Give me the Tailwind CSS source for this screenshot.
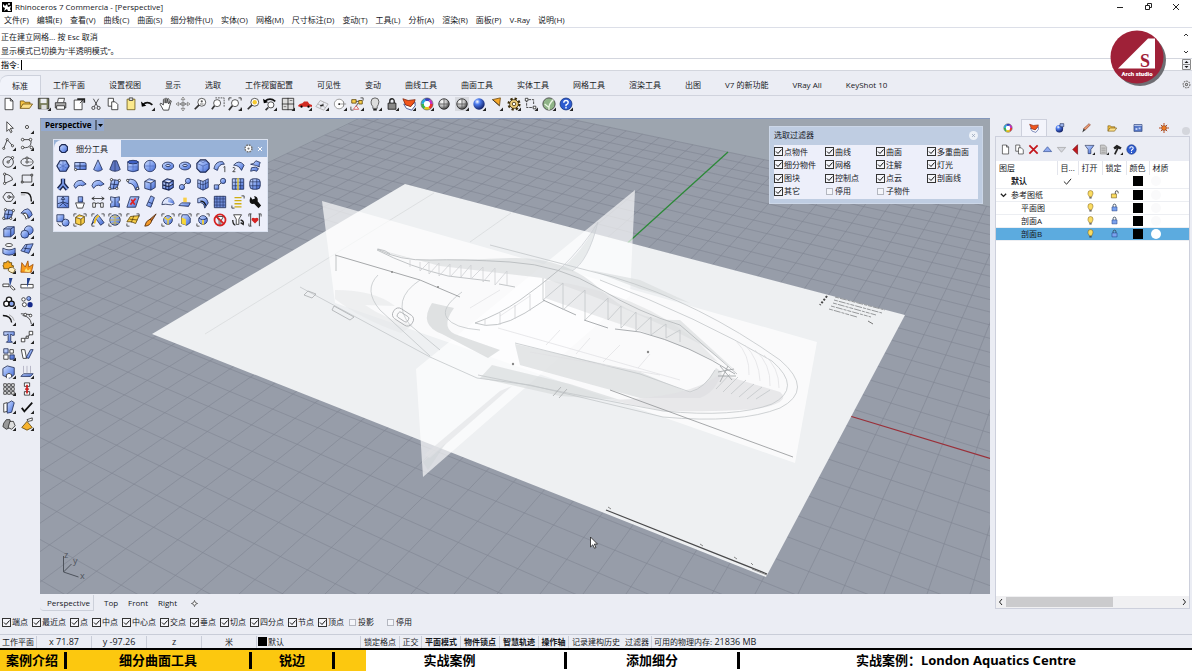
<!DOCTYPE html>
<html lang="zh-CN">
<head>
    <meta charset="UTF-8">
    <meta name="viewport" content="width=device-width, initial-scale=1.0">
    <title>Rhinoceros 7 Commercia - [Perspective]</title>
    <script src="https://cdn.jsdelivr.net/npm/@tailwindcss/browser@4"></script>
</head>
<body class="h-screen flex flex-col overflow-hidden bg-[#ebedf4] text-[#16181d] text-[8px] leading-[12px] font-['Open_Sans','Noto_Sans_CJK_SC',sans-serif]">

    <!-- Shared gradients -->
    <svg class="absolute size-0" aria-hidden="true">
        <defs>
            <linearGradient id="blue" x1="0" y1="0" x2="1" y2="1">
                <stop offset="0" stop-color="#d3e0fd"/><stop offset=".5" stop-color="#86a5f0"/><stop offset="1" stop-color="#4468cf"/>
            </linearGradient>
            <radialGradient id="ball" cx=".35" cy=".3" r=".8">
                <stop offset="0" stop-color="#fff"/><stop offset=".3" stop-color="#4f7ef0"/><stop offset="1" stop-color="#07104f"/>
            </radialGradient>
            <radialGradient id="grayball" cx=".35" cy=".3" r=".8">
                <stop offset="0" stop-color="#fff"/><stop offset=".5" stop-color="#bbb"/><stop offset="1" stop-color="#222"/>
            </radialGradient>
        </defs>
    </svg>

    <!-- Title bar -->
    <header class="bg-white">
        <div class="h-[13px] flex items-center pl-[2px]">
            <svg class="size-[10px] mr-[3px]" viewBox="0 0 10 10"><path d="M0 0h10v10H0z"/><path d="M1 2l2 2 2-2 1 3 3-1-1 3 1 2H6L5 7 2 9 3 6 1 5z" fill="#fff"/><circle cx="7" cy="2" r="1" fill="#fff"/></svg>
            <h1>Rhinoceros 7 Commercia - [Perspective]</h1>
            <div class="ml-auto flex gap-[18px] pr-[11px]">
                <button aria-label="最小化"><svg class="size-[10px]" viewBox="0 0 10 10" stroke="#222"><path d="M2 5.500h6"/></svg></button>
                <button aria-label="还原"><svg class="size-[10px]" viewBox="0 0 10 10" fill="none" stroke="#222"><path d="M2.500 3.500h4v4h-4zM4.500 3V1.500h4v4H7"/></svg></button>
                <button aria-label="关闭"><svg class="size-[10px]" viewBox="0 0 10 10" stroke="#222"><path d="M2 2l6 6M8 2L2 8"/></svg></button>
            </div>
        </div>
        <nav id="menu" class="h-[14px] flex items-center gap-2 px-1"></nav>
    </header>

    <!-- Command history and prompt -->
    <section class="relative bg-white border-t border-[#dcdfe8]">
        <div class="h-[30px] pt-[2px] pl-[1px] leading-[14px] flex justify-between">
            <div>
                <p>正在建立网格... 按 Esc 取消</p>
                <p>显示模式已切换为“半透明模式”。</p>
            </div>
            <svg class="w-[11px] h-7" viewBox="0 0 11 28" fill="none" stroke="#333"><path d="M3 6l2-2 2 2M3 21l2 2 2-2"/></svg>
        </div>
        <div class="h-[13px] flex items-center border-y border-[#d3d6de] pl-[1px]">
            <label for="cmd" class="mr-[2px] font-medium">指令:</label>
            <span class="w-px h-[10px] bg-black"></span>
            <input id="cmd" class="flex-1 h-[10px] outline-none">
            <svg class="w-[11px] h-[11px]" viewBox="0 0 11 11" fill="#eef0f5" stroke="#888"><path d="M1.500.5h8v5h-8zM1.500 5.500h8v5h-8z"/><path d="M5.500 2l2 2h-4zM5.500 9l2-2h-4z" fill="#111" stroke="none"/></svg>
        </div>
        <svg class="absolute z-10 right-[26px] top-[1px] w-[56px] h-[58px]" viewBox="0 0 56 58">
            <circle cx="30" cy="31" r="26" fill="#6e6e73"/>
            <circle cx="27" cy="28" r="26.500" fill="#9f2138"/>
            <path d="M8 39.500L38 9.500h7v30z" fill="#fff"/>
            <text x="30" y="38" font-family="Liberation Serif" font-weight="700" font-size="18" fill="#9f2138">S</text>
            <text x="27" y="47" text-anchor="middle" font-family="Roboto" font-weight="900" font-size="6" fill="#fff">Arch studio</text>
        </svg>
    </section>

    <!-- Toolbar tabs -->
    <div class="pt-[4px] flex items-end border-b border-[#d0d3dd]">
        <nav id="tabs" class="flex"></nav>
        <svg class="ml-auto mr-[1px] mb-[6px] size-[9px]" viewBox="0 0 16 16" fill="none" stroke="#777" stroke-width="2"><circle cx="8" cy="8" r="6" stroke-dasharray="3 1.500"/><circle cx="8" cy="8" r="2"/></svg>
    </div>
    <div id="mainbar" class="h-[22px] w-[573px] pl-[2px] pb-[6px] flex items-center justify-between"></div>

    <main class="flex-1 min-h-0 flex">
        <!-- Side tools -->
        <aside id="sidebar" class="w-10 h-[313px] pt-[2px] pr-[4px] grid grid-cols-2 content-between"></aside>

        <div class="flex-1 min-w-0 flex flex-col">
            <!-- Perspective viewport -->
            <section class="relative flex-1 min-h-0 bg-[#979da9] overflow-hidden border-t border-[#8497bb]">
                <svg class="block w-full h-full" viewBox="40 119 950 475" preserveAspectRatio="xMidYMid slice">
                    <path d="M40 119V272L360 119zM570 119L728 152 990 207V119z" fill="#9da5af"/>
                    <g id="grid" stroke="#7c828e" stroke-width=".6" opacity=".85"></g>
                    <path d="M728 152L600 268" stroke="#2c8a38" stroke-width="1.300"/>
                    <path d="M830 410L990 458.500" stroke="#9a3039" stroke-width="1.200"/>

                    <!-- Ground plan sheet -->
                    <path d="M405 184L905 315 766 577 152 334z" fill="#eef0f2"/>
                    <path d="M434 193L205 334M511 213L470 242" fill="none" stroke="#d6d8da" stroke-width=".7"/>

                    <!-- Long section sheet and cross section sheet -->
                    <path d="M322 201L817 342 795 463 335 303z" fill="#fff" opacity=".68"/>
                    <path d="M635 190L416 369 423 477 630 296z" fill="#fff" opacity=".66"/>

                    <!-- Plan linework -->
                    <path d="M432 303q-14 22 10 31l46 24 12-8-40-14q-22-6-6-28z" fill="#d3d5d7" opacity=".7"/>
                    <path d="M515 344L640 372 690 393Q705 388 716 368L722 372Q716 392 700 398L640 398 520 365zM480 378L492 365 570 384 620 400 560 396z" fill="#d9dbdd" opacity=".7"/>
                    <path d="M590 270L640 280 690 303 640 289z" fill="#dcdee0" opacity=".7"/>
                    <path d="M720 374L780 392Q790 400 770 406T663 411L610 400Q690 398 720 374z" fill="#dfe0e2" opacity=".7"/>
                    <path d="M335 290q40 0 60 16l-30-1q20 14 48 20l-12 8q-40-14-66-34z" fill="#e6e8ea" opacity=".6"/>
                    <g fill="none" stroke="#c3c6c9" stroke-width=".8">
                        <path d="M300 287L430 357 477 378 530 385 663 417Q740 424 780 408 Q815 390 780 360 Q700 303 613 277L490 245"/>
                        <path d="M478 375Q580 396 663 411 Q735 418 772 404 Q803 388 772 361 Q700 318 600 280"/>
                        <path d="M378 275Q363 290 380 310L430 356M420 280Q390 300 410 325L440 350"/>
                        <path d="M462 292Q440 308 447 318T480 330M515 343L640 374 690 392Q705 388 715 370"/>
                    </g>
                    <g fill="none" stroke="#dfe0e2" stroke-width=".7">
                        <path d="M498 328L680 380M530 352L660 375M745 345q14 14 15 36M755 350q16 14 15 36M736 341q14 14 13 34M764 355q15 12 15 33"/>
                        <path d="M560 330l-14 15M590 338l-14 16M620 345l-17 17M650 354l-12 14M500 290l-30 18M530 296l-30 20"/>
                    </g>
                    <g fill="none" stroke="#a9acaf" stroke-width=".8">
                        <rect x="392" y="311" width="22" height="12" rx="5" transform="rotate(33 403 317)"/>
                        <rect x="397" y="314" width="12" height="6" rx="2" transform="rotate(33 403 317)"/>
                        <path d="M308 291l8 3-4 4-8-3zM334 306l20 11-4 3-18-10zM553 396l8-9M559 398l8-9"/>
                        <path d="M730 374l-14 15M738 377l-15 15M746 380l-15 14M754 384l-15 13M762 387l-15 12M770 390l-14 9" stroke="#c3c6c9"/>
                    </g>

                    <!-- Roof truss -->
                    <path d="M377 249Q405 260 430 260T510 258 600 289 680 320L737 372 700 344Q640 312 543 278L440 266z" fill="#d6d8da" opacity=".6"/>
                    <path d="M545 280Q640 292 700 344L718 362Q670 340 608 320L545 298z" fill="#dddfe1" opacity=".6"/>
                    <g fill="none" stroke="#b3b6b9" stroke-width=".8">
                        <path d="M335 255L420 280 460 297M610 390L793 457" stroke="#909396"/>
                        <path d="M336 256v15M378 249q8 1 12 5" />
                        <path d="M377 249Q400 261 430 260T510 262 600 289 680 325L737 374M377 250Q410 267 448 276L490 281M499 284l16 3"/>
                        <path d="M410 260v7M420 262v9l9-9v12l10-11v13l11-12v13l11-12v12l10-12v14l12-12v15l12-14v17l12-14v15" stroke="#cfd1d4"/>
                        <path d="M475 323Q500 314 520 300T560 269M475 323Q495 331 525 313L545 300"/>
                        <path d="M543 300L576 315M584 320L608 328M615 329L640 332Q690 345 735 374" stroke="#96999d"/>
                        <path d="M543 278v22l20-17v27l22-20v30l23-22v22l13-14v22l15-16v19l15-14v18l15-11v14l14-8v12" stroke="#c3c6c9"/>
                        <path d="M485 319v6M500 313v12M515 305v14M530 294v17" stroke="#cfd1d4"/>
                        <path d="M718 372l16-3M718 376h18M720 366l12 14M728 366l-8 16" stroke="#9b9ea1"/>
                    </g>
                    <g fill="#888"><circle cx="392" cy="272" r="1"/><circle cx="438" cy="287" r="1"/><circle cx="513" cy="364" r="1.200"/><circle cx="648" cy="352" r="1.200"/></g>
                    <path d="M598 222Q588 262 572 271M560 269Q585 245 598 222" fill="none" stroke="#c9ccd1" stroke-width=".7"/>
                    <path d="M598 222Q580 255 560 269L572 271Q590 258 598 222zM423 462L446 443 428 470z" fill="#c9cdd2" opacity=".35"/>
                    <path d="M424 455L500 391 512 386 430 458z" fill="#dfe1e4" opacity=".6"/>

                    <!-- Legend and scale bar -->
                    <g stroke="#8b8d90" stroke-width=".9" stroke-dasharray="4 1 7 1 3 1">
                        <path d="M835 297l50 13M834 300l48 13M833 303l43 12M831 306l40 11M829 309l28 8"/>
                        <path d="M827 296l-7 9" stroke="#444" stroke-width="2" stroke-dasharray="2 1.500"/>
                    </g>
                    <path d="M868 321l5 3" stroke="#777"/>
                    <path d="M606 510L767 574" stroke="#4a4a4c" stroke-width="1.300"/>
                    <path d="M608 507l3 2M700 544l3 2M734 557l3 2M751 563l2 2M752 569l15 6" stroke="#888"/>

                    <g stroke="#4e535c" fill="none"><path d="M63.500 572v-16M63.500 572l8-8M63.500 572l15 5"/></g>
                    <g fill="#4e535c" font-size="9" font-family="Open Sans"><text x="64" y="558">z</text><text x="73" y="564">y</text><text x="80" y="579">x</text></g>
                    <path d="M590.500 537v10l2.300-2.200 1.700 3.500 1.500-.8-1.700-3.400h3.200z" fill="#fff" stroke="#222" stroke-width=".8"/>
                </svg>

                <button class="absolute left-[1px] top-0 h-[12px] w-[63px] pl-[4px] flex items-center bg-[#93a9cf] font-bold text-black">
                    Perspective
                    <svg class="ml-auto w-[9px] h-[10px]" viewBox="0 0 9 10"><path d="M1 0v10" stroke="#222"/><path d="M3 4h5L5.500 7z"/></svg>
                </button>

                <!-- SubD tools palette -->
                <div class="absolute left-[13px] top-[20px] w-[215px] h-[93px] bg-[#edeffa] border border-[#dbe2f0]">
                    <div class="h-[17px] flex items-center bg-[#98b2d7]">
                        <h2 class="w-[67px] h-full pl-[5px] flex items-center gap-[8px] bg-[#edeffa] rounded-tl-lg">
                            <svg class="size-[9px]" viewBox="0 0 16 16"><path d="M5 1h6l4 4v6l-4 4H5l-4-4V5z" fill="url(#blue)" stroke="#1b2750" stroke-width="2"/></svg>
                            细分工具
                        </h2>
                        <button aria-label="选项" class="ml-auto"><svg class="size-[9px]" viewBox="0 0 16 16"><circle cx="8" cy="8" r="6" fill="#fff" stroke="#777" stroke-width="3" stroke-dasharray="3 1.700"/><circle cx="8" cy="8" r="4.500" fill="#fff"/><circle cx="8" cy="8" r="2" fill="#777"/></svg></button>
                        <button aria-label="关闭" class="mx-[4px]"><svg class="size-[6px]" viewBox="0 0 6 6" stroke="#fff"><path d="M1 1l4 4M5 1L1 5"/></svg></button>
                    </div>
                    <div id="subd" class="h-[72px] pr-[3px] grid grid-cols-12 content-around"></div>
                </div>

                <!-- Selection filter -->
                <div class="absolute right-[7px] top-[7px] w-[214px] h-[78px] px-1 bg-[#bfcde2] border border-[#ccd7e8]">
                    <div class="h-[18px] pb-[2px] flex items-center justify-between">
                        <h2>选取过滤器</h2>
                        <button aria-label="关闭"><svg class="size-[9px]" viewBox="0 0 10 10"><circle cx="5" cy="5" r="5" fill="#edf1f7"/><path d="M3.500 3.500l3 3M6.500 3.500l-3 3" stroke="#9aa7bc"/></svg></button>
                    </div>
                    <div id="filters" class="h-[54px] pb-[1px] grid grid-cols-4 bg-[#edeffa]"></div>
                </div>
            </section>

            <!-- Viewport tabs -->
            <nav class="h-[18px] flex items-center gap-[10px]">
                <a href="#" class="h-[16px] flex items-center pl-[7px] pr-[3px] border-r border-b border-[#ccd0da] rounded-bl">Perspective</a>
                <a href="#">Top</a>
                <a href="#">Front</a>
                <a href="#">Right</a>
                <button aria-label="新增" class="ml-1"><svg class="size-[7px]" viewBox="0 0 8 8" fill="#fff" stroke="#555"><path d="M4 .5L5 3l2.500 1L5 5 4 7.500 3 5 .5 4 3 3z"/></svg></button>
            </nav>
        </div>

        <!-- Layers panel -->
        <aside class="w-[202px] pl-[5px] pr-[2px] pb-[3px] flex flex-col">
            <div id="paneltabs" class="flex items-end h-[18px] pt-[2px]"></div>
            <div class="flex-1 min-h-0 flex flex-col border border-[#cdd0dc]">
                <div id="layerbar" class="h-[24px] pl-[4px] flex items-center gap-[3px]"></div>
                <div class="flex-1 bg-white">
                    <table class="w-full table-fixed border-collapse">
                        <thead>
                            <tr class="h-[14px] text-left">
                                <th class="w-[61px] pl-[3px] font-normal border-r border-[#e3e5ec]">图层</th>
                                <th class="w-[21px] pl-[3px] font-normal border-r border-[#e3e5ec]">目...</th>
                                <th class="w-[24px] pl-[3px] font-normal border-r border-[#e3e5ec]">打开</th>
                                <th class="w-[24px] pl-[3px] font-normal border-r border-[#e3e5ec]">锁定</th>
                                <th class="w-[23px] pl-[3px] font-normal border-r border-[#e3e5ec]">颜色</th>
                                <th class="pl-[3px] font-normal">材质</th>
                            </tr>
                        </thead>
                        <tbody id="layers"></tbody>
                    </table>
                </div>
                <div class="h-[12px] flex items-center bg-[#f0f0f2]">
                    <svg class="w-[10px] h-[10px]" viewBox="0 0 10 10" fill="none" stroke="#222"><path d="M6 2L3.500 5 6 8"/></svg>
                    <div class="flex-1"><div class="w-[62%] h-[10px] bg-[#cbcbcd]"></div></div>
                    <svg class="w-[10px] h-[10px]" viewBox="0 0 10 10" fill="none" stroke="#222"><path d="M4 2l2.500 3L4 8"/></svg>
                </div>
            </div>
        </aside>
    </main>

    <!-- Object snaps -->
    <div id="osnap" class="h-[22px] pl-[2px] pb-[2px] flex items-center gap-[4px]"></div>

    <!-- Status bar -->
    <footer class="h-[14px] flex items-center border-t border-[#c9cdd8] whitespace-nowrap">
        <span class="w-[37px] pl-[2px] border-r border-[#c9cdd8]">工作平面</span>
        <span class="w-[55px] text-center text-[9px] border-r border-[#c9cdd8]">x 71.87</span>
        <span class="w-[55px] text-center text-[9px] border-r border-[#c9cdd8]">y -97.26</span>
        <span class="w-[55px] text-center text-[9px] border-r border-[#c9cdd8]">z</span>
        <span class="w-[55px] text-center border-r border-[#c9cdd8]">米</span>
        <span class="w-[104px] pl-[1px] flex items-center gap-[1px] border-r border-[#c9cdd8]"><i class="size-[9px] bg-black"></i>默认</span>
        <span class="w-[39px] text-center border-r border-[#c9cdd8]">锁定格点</span>
        <span class="w-[22px] text-center border-r border-[#c9cdd8]">正交</span>
        <b class="w-[39px] text-center border-r border-[#c9cdd8]">平面模式</b>
        <b class="w-[39px] text-center border-r border-[#c9cdd8]">物件锁点</b>
        <b class="w-[39px] text-center border-r border-[#c9cdd8]">智慧轨迹</b>
        <b class="w-[30px] text-center border-r border-[#c9cdd8]">操作轴</b>
        <span class="w-[54px] text-center">记录建构历史</span>
        <span class="w-[29px] text-center border-r border-[#c9cdd8]">过滤器</span>
        <span class="pl-[2px] text-[9px]"><span class="text-[8px]">可用的物理内存:</span> 21836 MB</span>
    </footer>

    <!-- Chapter progress -->
    <div class="relative h-[23px] border-t-2 border-black bg-white">
        <div class="absolute inset-y-0 left-0 bg-[#fcc80f]" style="width: 30.700%"></div>
        <ol class="relative h-full grid grid-cols-[67fr_185fr_83fr_232fr_173fr_452fr] items-center text-center text-[13px] leading-[17px] font-bold text-black font-['Noto_Sans','Noto_Sans_CJK_SC',sans-serif] whitespace-nowrap">
            <li class="border-r-3 border-black">案例介绍</li>
            <li class="border-r-3 border-black">细分曲面工具</li>
            <li class="border-r-3 border-black">锐边</li>
            <li class="border-r-3 border-black">实战案例</li>
            <li class="border-r-3 border-black">添加细分</li>
            <li>实战案例：London Aquatics Centre</li>
        </ol>
    </div>

    <script>
        const B = 'fill="url(#blue)" stroke="#1b2750"';
        const N = 'fill="none" stroke="#222"';
        const W = 'fill="#fff" stroke="#222"';
        const Y = 'fill="#f9cf4a" stroke="#5a4208"';
        const brackets = '<path d="M1 4V1h3M12 1h3v3M1 12v3h3" fill="none" stroke="#333"/>';

        const icons = {
            // files and editing
            new: `<path d="M3.500 1.500h6l3 3v10h-9zM9.500 1.500v3h3" ${W}/>`,
            open: `<path d="M1.500 13V4.500h4l1 1.500h6v2" fill="#f6c445" stroke="#6b4c08"/><path d="M1.500 13L4.500 8h11L12 13z" fill="#fde08a" stroke="#6b4c08"/>`,
            save: `<path d="M1.500 1.500h12v12h-12z" fill="#777b58" stroke="#222"/><path d="M4 2h7v5H4z" fill="#eceef2"/><path d="M5 9h6v5H5z" fill="#ddd"/>`,
            print: `<path d="M4 6l1-4.500h7L11 6" ${W}/><path d="M1.500 6.500h12v6h-12z" fill="#aaa" stroke="#222"/><path d="M3 10h9v4H3z" ${W}/>`,
            props: `<path d="M2.500 3.500h9v11h-9z" ${W}/><path d="M6 2.500h8v4" stroke="#222" stroke-width="2" fill="none"/><path d="M9 7l4-4" ${N}/>`,
            cut: `<path d="M5 2l5 9M11 2L6 11" ${N}/><circle cx="5" cy="12.500" r="1.800" ${N}/><circle cx="11" cy="12.500" r="1.800" ${N}/>`,
            copy: `<path d="M2.500 1.500h6v9h-6z" ${W}/><path d="M6.500 5.500h4l3 3v6h-7z" ${W}/>`,
            paste: `<path d="M3.500 2.500h9v12h-9z" fill="#fbe98d" stroke="#665510"/><path d="M6 1h4v3H6z" fill="#ddd" stroke="#333"/>`,
            undo: `<path d="M2 9q5-5 11 0" fill="none" stroke="#111" stroke-width="2"/><path d="M0 5l1 6 5-1z"/>`,
            // view navigation
            hand: `<path d="M5 15Q3 11 1 8l1-1 3 2V3l1-1 1 1v4V2l1-1 1 1v5l1-5h1l.5 1L11 8l2-4 1 .5L12 11l-1 4z" ${W}/>`,
            rotate: `<path d="M8 1v14M1 8h14" stroke="#888"/><path d="M8 0l2 3H6zM8 16l2-3H6zM0 8l3-2v4zM16 8l-3-2v4z" fill="#fff" stroke="#777"/><ellipse cx="8" cy="8" rx="3" ry="1.500" fill="none" stroke="#666"/>`,
            zoom: `<circle cx="10" cy="6" r="4.500" fill="#fff" stroke="#333"/><path d="M7 9l-5 5" stroke="#333" stroke-width="2"/><circle cx="10" cy="5" r="1.200" fill="#555"/><path d="M8 8h4" stroke="#555"/>`,
            zoomwin: `<path d="M5 1h10v10" fill="none" stroke="#333" stroke-dasharray="2 1"/><circle cx="7" cy="7" r="4" fill="#fff" stroke="#333"/><path d="M4 10l-3 4" stroke="#333" stroke-width="2"/>`,
            zoomext: `<path d="M1 4V1h3M12 1h3v3M15 12v3h-3M4 15" ${N}/><circle cx="8" cy="7" r="4" fill="#fff" stroke="#333"/><path d="M5 10l-4 5" stroke="#333" stroke-width="2"/>`,
            zoomsel: `<circle cx="10" cy="6" r="4.500" fill="#fff" stroke="#333"/><circle cx="10" cy="6" r="2.500" fill="#f6c92e"/><path d="M7 9l-5 5" stroke="#333" stroke-width="2"/>`,
            zoomprev: `<path d="M2 5q6-5 12 0" fill="none" stroke="#111" stroke-width="2"/><path d="M0 2l1 5 5-1z"/><circle cx="9" cy="9" r="3.500" ${W}/><path d="M6 12l-3 3" stroke="#333" stroke-width="2"/>`,
            views: `<path d="M1.500 1.500h13v13h-13zM8 1v14M1 8h14" fill="#ddd" stroke="#222"/><path d="M10 4h3M3 11h3" stroke="#666"/>`,
            // display and tools
            car: `<path d="M0 10l2-2 3-1 2-2h4l2 3 3 1v2H1z" fill="#d12b22"/><circle cx="4" cy="11" r="1.300"/><circle cx="12" cy="11" r="1.300"/>`,
            cplane: `<path d="M1 11l5-7 9 4-5 7zM3 8l9 4M6 13l4-7" fill="none" stroke="#aaa"/><path d="M6 10l4-1" stroke="#222" stroke-width="1.500"/>`,
            target: `<circle cx="7" cy="8" r="5.500" fill="#fff" stroke="#888"/><path d="M7 8h8M12 5v6" stroke="#888"/><circle cx="7" cy="8" r="1"/>`,
            select: `<path d="M1 11v4h3M12 1h3v3" fill="none" stroke="#333"/><path d="M2 3h5v4H2z" ${Y}/><path d="M7 5h5M9 7l-2 4" stroke="#333"/><path d="M10 4h4v4h-4z" ${Y}/><path d="M4 14l3-4 3 4z" fill="#fff" stroke="#c44"/>`,
            bulb: `<path d="M5.500 11Q3 8 3.500 5.500a4.500 4.500 0 019 0Q12 9 10.500 11v2h-5z" fill="#ddd" stroke="#444"/><path d="M6 14.500h4" stroke="#222" stroke-width="2"/>`,
            lock: `<path d="M5.500 7V4.500a2.500 2.500 0 015 0V7" fill="none" stroke="#222" stroke-width="1.500"/><path d="M3.500 7h9v7h-9z" fill="#888" stroke="#111"/>`,
            layers: `<path d="M2 8l3 5 6 2 4-5V6l-5 4z" fill="#fff" stroke="#233a8a"/><path d="M1 2l6 2 8-1-1 3-4 5-6-2z" fill="#f2561d" stroke="#7d220a"/>`,
            wheel: `<circle cx="8" cy="8" r="5" fill="none" stroke="#e33" stroke-width="3.500" stroke-dasharray="5.200 26.200"/><circle cx="8" cy="8" r="5" fill="none" stroke="#e8c818" stroke-width="3.500" stroke-dasharray="5.200 26.200" stroke-dashoffset="-5.200"/><circle cx="8" cy="8" r="5" fill="none" stroke="#39b54a" stroke-width="3.500" stroke-dasharray="5.200 26.200" stroke-dashoffset="-10.400"/><circle cx="8" cy="8" r="5" fill="none" stroke="#22a9dd" stroke-width="3.500" stroke-dasharray="5.200 26.200" stroke-dashoffset="-15.600"/><circle cx="8" cy="8" r="5" fill="none" stroke="#3844c4" stroke-width="3.500" stroke-dasharray="5.200 26.200" stroke-dashoffset="-20.800"/><circle cx="8" cy="8" r="5" fill="none" stroke="#c32fbe" stroke-width="3.500" stroke-dasharray="5.400 26" stroke-dashoffset="-26"/><circle cx="8" cy="8" r="3.500" fill="#fff"/><circle cx="8" cy="8" r="6.900" fill="none" stroke="#444" stroke-width=".6"/>`,
            shaded: `<circle cx="8" cy="8" r="6" fill="url(#grayball)" stroke="#222"/><path d="M8 2v12M2 8h12" stroke="#555"/>`,
            wirefr: `<path d="M0 0h16v16H0z" fill="#d8dae0"/><circle cx="8" cy="8" r="6" fill="url(#grayball)" stroke="#222"/><path d="M8 2v12M2 8h12" stroke="#555"/>`,
            render: `<circle cx="8" cy="8" r="6.500" fill="url(#ball)"/>`,
            spot: `<path d="M4 3l9-2-1 9z" fill="#f7a92b" stroke="#6b4308"/><path d="M4 3l8 7" stroke="#333"/>`,
            gear: `<circle cx="8" cy="8" r="6" fill="none" stroke="#3b2c0b" stroke-width="3" stroke-dasharray="2.500 2.200"/><circle cx="8" cy="8" r="5" fill="#f0cf7a" stroke="#3b2c0b"/><circle cx="8" cy="8" r="2" fill="#fff" stroke="#3b2c0b"/>`,
            history: `<path d="M3 3v9h9M5 3h6v6" fill="none" stroke="#222" stroke-dasharray="3 1"/><path d="M1.500 1.500h3v3h-3zM10.500 10.500h3v3h-3z" ${W}/>`,
            grass: `<circle cx="8" cy="8" r="7" fill="#8fb487" stroke="#333"/><path d="M8 15Q7 8 13 3M8 12L3 8" stroke="#e9f5e2" stroke-width="1.500" fill="none"/>`,
            help: `<circle cx="8" cy="8" r="6.800" fill="#2d5bd0" stroke="#12307c"/><path d="M5.500 6.500Q5.500 4 8 4t2.500 2.300Q10.500 8 8 9v1.500M8 11.500v1.500" fill="none" stroke="#fff" stroke-width="1.600"/>`,
            // drawing
            arrow: `<path d="M5.500 2v11l2.500-2.500 2 4 1.500-1-2-4h3.500z" ${W}/>`,
            point: `<circle cx="8" cy="8" r="1.800" ${W}/>`,
            pline: `<path d="M2 13L6 3l6 7" ${N}/><circle cx="2" cy="13" r="1.200" ${W}/><circle cx="6" cy="3" r="1.200" ${W}/><circle cx="12" cy="10" r="1.200" ${W}/>`,
            curve: `<path d="M3 3h8q3 2 1 6-2 4-9 3" ${N}/><circle cx="3" cy="3" r="1.500" ${W}/><circle cx="12" cy="3" r="1.500" ${W}/><circle cx="3" cy="12" r="1.500" ${W}/><circle cx="13" cy="12" r="1.500" ${W}/>`,
            circle: `<circle cx="7" cy="8" r="6" ${N}/><path d="M7 8l5-5" ${N}/><circle cx="7" cy="8" r="1.300" ${W}/><circle cx="12" cy="3" r="1.300" ${W}/>`,
            ellipse: `<ellipse cx="8" cy="8" rx="7" ry="4.500" ${N}/><path d="M8 8V3M8 8h6" stroke="#888"/><circle cx="8" cy="8" r="1.300" ${W}/><circle cx="8" cy="3.500" r="1.300" ${W}/>`,
            arc: `<path d="M3 2q9 2 9 7L3 13z" ${N}/><circle cx="3" cy="2.500" r="1.300" ${W}/><circle cx="3" cy="13" r="1.300" ${W}/>`,
            rect: `<path d="M2.500 3.500h11v8h-11z" ${N}/><path d="M1.500 10.500h2v2h-2zM12.500 2.500h2v2h-2z" ${W}/>`,
            polygon: `<path d="M4.500 3h6L14 8l-3.500 5h-6L1 8z" ${N}/><circle cx="8" cy="8" r="1.500" ${W}/><path d="M8 8h5" stroke="#222"/>`,
            fillet: `<path d="M1 3h5q7 0 7 10" fill="none" stroke="#111" stroke-width="1.600"/><path d="M1 5.500h5" stroke="#999"/>`,
            // surfaces and solids
            patch: `<path d="M4 3l9 1-3 9-8 1zM8 3L6 14M3 8l9 1" ${B}/><circle cx="4" cy="3" r="1.300" ${W}/><circle cx="13" cy="4" r="1.300" ${W}/><circle cx="10" cy="13" r="1.300" ${W}/><circle cx="2" cy="13" r="1.300" ${W}/>`,
            sweep: `<path d="M1 7Q5 2 9 2q4 2 5 7l-4 4Q9 8 6 7z" ${B}/><path d="M9 12q0-4-3-5l-3 1q3 1 4 6z" ${W}/>`,
            box: `<path d="M2 4.500L6 2h8v8l-4 3.500H2z" ${B}/><path d="M2 4.500h8V13.500M10 4.500L14 2" fill="none" stroke="#1b2750"/>`,
            spheres: `<circle cx="10" cy="6" r="5" ${B}/><circle cx="5.500" cy="10.500" r="4.500" ${B}/>`,
            tube: `<path d="M1 7v6q7 4 14 0V7q-7 4-14 0z" ${B}/><ellipse cx="8" cy="3.500" rx="4" ry="1.800" ${W}/>`,
            mesh: `<path d="M1 10l5-7 9-1-5 11zM4 7l8 1M8 3l-3 8" ${B}/>`,
            puzzle: `<path d="M2 3h3q0-2 2-2t1 2h3v3q3 0 2 2t-2 1v1H2V8q-2-1 0-3z" fill="#f6a81f" stroke="#5a4208"/><path d="M8 9l4-1 3 3-2 4-3-1-3-2z" fill="#fdf0c5" stroke="#5a4208"/>`,
            explode: `<path d="M1 14L2 3l4 5 3-7 1 7 5-3-2 9z" fill="#f79a1d" stroke="#a04c06"/><path d="M5 13l2-4 2 3 3-2-1 4z" fill="#fde27a"/>`,
            trim: `<path d="M1 8h7v3H1zM9 11l2-1 4 4-2 1z" ${W}/><path d="M8 1h4L9 11z" fill="#24428f"/>`,
            split: `<path d="M1 8.500h14v4H1z" ${W}/><path d="M8 1h4L8 12z" fill="#24428f"/>`,
            bool3: `<circle cx="8" cy="5.500" r="3" ${W} stroke-width="1.500"/><circle cx="5" cy="10" r="3" fill="#fff" stroke="#111" stroke-width="1.500"/><circle cx="11" cy="10" r="3" fill="#8aa6ef" stroke="#111" stroke-width="1.500"/>`,
            dots3: `<circle cx="4" cy="5" r="2" ${W}/><circle cx="10" cy="4" r="2.300" ${B}/><circle cx="5" cy="11" r="2.300" ${W}/><circle cx="11.500" cy="11" r="3" fill="#152a8a"/>`,
            offset: `<path d="M1 4q9 0 10 8" fill="none" stroke="#111" stroke-width="1.500"/><path d="M8 3q5 2 6 7" fill="none" stroke="#999"/>`,
            blend: `<path d="M1 2l12 1M3 4q9 1 10 10" ${N}/><circle cx="6" cy="3" r="1.500" ${W}/><circle cx="12" cy="4" r="1.500" ${W}/>`,
            text: `<path d="M2 2h12v4h-2.500L10 4.500V12l2 2H5l2-2V4.500L5 6H2z" ${B}/>`,
            move: `<path d="M3 12L13 4" stroke="#222"/><path d="M1.500 9.500h4v4h-4zM10.500 1.500h4v4h-4zM7 7h2.500v2.500H7z" ${W}/>`,
            group: `<path d="M2 2h5v5H2zM9 9h5v5H9z" ${B}/><path d="M9 3h4v4H9zM2 9h5v5H2z" ${W}/>`,
            align: `<path d="M1.500 3h4l2 10h-4z" ${W}/><path d="M7 12l5-9h3l-5 10z" ${B}/>`,
            shell: `<path d="M1 4l5-3 8 2v8l-5 4-8-3z" ${B}/><path d="M5 15v-4q3-3 6 0v3" ${W}/>`,
            project: `<path d="M4 1v8M8 1v8M12 1v8" stroke="#aab"/><path d="M1 13l3-3h11l-3 3z" ${B}/>`,
            array: `<path d="M2 2h3v3H2zM6.500 2h3v3h-3zM11 2h3v3h-3zM2 6.500h3v3H2zM6.500 6.500h3v3h-3zM11 6.500h3v3h-3zM2 11h3v3H2zM6.500 11h3v3h-3zM11 11h3v3h-3z" ${W}/>`,
            dim: `<path d="M5 1h6v4H5zM5 11h6v4H5z" ${W}/><path d="M8 3v10M6 8h4" stroke="#c22" stroke-width="2"/>`,
            flip: `<path d="M2 4l4-1v10l-4 1z" ${W}/><path d="M6 4l5-3 3 2-3 11-5 1z" ${B}/>`,
            check: `<path d="M2 9l3 4 9-10" fill="none" stroke="#111" stroke-width="2"/>`,
            solids: `<path d="M2 7l3-4h4l2 8-6 3-4-3z" fill="#999" stroke="#222"/><path d="M9 5h4l2 5-4 4-4-2z" fill="#ddd" stroke="#222"/>`,
            cone: `<path d="M2 12l6-7 6 7-6 3z" fill="#f7b32d" stroke="#5a4208"/><path d="M8 3l6-2v3l-5 1z" ${W}/>`,
            // subd primitives
            hex: `<path d="M4.500 2h7L15 8l-3.500 6h-7L1 8z" ${B} stroke-width="1.300"/><path d="M8 2v12M3 5l10 6M13 5L3 11" stroke="#4b68b8" stroke-width=".7"/>`,
            plane: `<path d="M2 4h11q2 0 2 2v6H4q-2 0-2-2zM8 4v8M2 8h13" ${B}/><circle cx="3" cy="12" r="1.300" ${W}/>`,
            subcone: `<path d="M8 1l5 11q-5 4-10 0z" ${B}/>`,
            subcone2: `<path d="M6 2h4l4 10q-6 4-12 0z" fill="#5f78c4" stroke="#1b2750"/><path d="M8 2v12" stroke="#1b2750" stroke-width=".6"/>`,
            cyl: `<path d="M2 3v10q6 3 12 0V3z" ${B}/><ellipse cx="8" cy="3.500" rx="6" ry="2" fill="#3d5fc4" stroke="#1b2750"/><path d="M2 9h12M8 5v10" stroke="#4b68b8" stroke-width=".7"/>`,
            sphere: `<circle cx="8" cy="8" r="6.500" ${B}/><path d="M1.500 8h13M8 1.500v13" stroke="#4b68b8" stroke-width=".7"/>`,
            torus: `<ellipse cx="8" cy="8" rx="6.500" ry="4.500" ${B}/><ellipse cx="8" cy="7.500" rx="2.500" ry="1.200" fill="#dfe6fb" stroke="#1b2750"/>`,
            subsphere: `<path d="M5 1h6l4 4v6l-4 4H5l-4-4V5z" ${B} stroke-width="1.300"/><path d="M1 5l7 3 7-3M8 8v7M4 2l4 2 4-2" fill="none" stroke="#3d559f" stroke-width=".7"/>`,
            sweep1: `<path d="M1 11Q3 2 11 3l2 3Q7 5 5 13z" ${B}/><path d="M12 9.500l1.500-1V15" ${N}/>`,
            sweep2: `<path d="M3 7q6-7 12 0l-3 6Q9 7 3 7z" ${B}/><path d="M2 10q2-1 2.500.5T2 14.500h3" ${N}/>`,
            loft: `<path d="M3 6q4 0 6-4l5 2q-2 3-1 5-4-2-10-3zM4 10q5-2 8 1l-2 3q-3-2-7 0z" ${B}/>`,
            multipipe: `<path d="M8 8V2M8 8l-5 6M8 8l5 6" stroke="#1b2750" stroke-width="5"/><path d="M8 8V2M8 8l-5 6M8 8l5 6" stroke="#7c9ceb" stroke-width="2"/>`,
            face: `<path d="M1 10Q3 3 10 4l5 4-4 2Q6 8 3 13z" ${B}/>`,
            bridgeb: `<path d="M1 3q10-2 12 5l2 6-4 1Q9 7 3 7z" ${B}/><circle cx="2" cy="4" r="1.300" ${W}/><circle cx="13" cy="13" r="1.300" ${W}/>`,
            cube: `<path d="M2 5l5-3 7 2v8l-5 3-7-2zM2 5l7 2 5-3M9 7v8" ${B}/>`,
            cubegrid: `<path d="M2 5l5-3 7 2v8l-5 3-7-2zM2 5l7 2 5-3M9 7v8M2 9l7 2 5-3M5.500 6v8" ${B} stroke-width="1.200"/>`,
            link: `<path d="M4 12l8-8" stroke="#222"/><circle cx="11.500" cy="4.500" r="3" ${B}/><circle cx="4.500" cy="11.500" r="3" ${B}/>`,
            linkbox: `<path d="M4 12l8-8" stroke="#222"/><circle cx="11.500" cy="4.500" r="3" ${B}/><path d="M1.500 9h5v5h-5z" ${B}/>`,
            wall: `<path d="M2 3l6 2 6-3v10l-6 3-6-3z" ${B}/><path d="M2 7l6 2 6-3M5 4v10M8 5v10M11 4v9" fill="none" stroke="#1b2750" stroke-width=".7"/>`,
            insert: `<path d="M1.500 2h13v12h-13z" ${B}/><path d="M2 6h12M2 10h12M5 2v12M11 2v12" stroke="#1b2750" stroke-width=".7"/><path d="M8 1v14" stroke="#f4d126" stroke-width="1.500"/>`,
            meshcube: `<rect x="2" y="2" width="12" height="12" rx="4" ${B}/><path d="M5.500 2v12M10 2v12M2 5.500h12M2 10h12" stroke="#1b2750" stroke-width=".7"/>`,
            expand: `<path d="M1.500 1.500h13v13h-13z" ${B}/><path d="M8 2l2 3H6zM8 5v4M2 10l6-2 6 2M4 13l4-4 4 4" fill="none" stroke="#1b2750"/>`,
            extrude: `<path d="M3 9h10l-2 6H5z" ${W}/><path d="M6 2h5v6H6z" ${B}/>`,
            width: `<path d="M1 4h14M4 2L1 4l3 2M12 2l3 2-3 2" ${N}/><path d="M2 9h3v5H2zM11 9h3v5h-3z" ${W}/><path d="M5 10q3-2 6 0" ${N}/>`,
            twin: `<path d="M3 2q5 2 10 0v4l-2 2 2 2v4q-5-2-10 0v-4l2-2-2-2z" ${B}/><path d="M8 3v10" stroke="#1b2750"/>`,
            nosym: `<path d="M1 14L5 2h10l-4 12z" ${B}/><path d="M5 11l6-7M6 5l4 6" stroke="#d22" stroke-width="2"/>`,
            bar: `<path d="M9 1l4 2-4 11-5-2z" ${B}/><path d="M6 8l5 2" stroke="#1b2750"/>`,
            slab: `<path d="M1 11Q2 4 8 3q6 1 7 7-3 2-6 1t-8 0z" fill="#dfe6fb" stroke="#1b2750"/><path d="M8 3q6 1 7 7l-7-2z" fill="url(#blue)"/>`,
            pull: `<path d="M1 12l3-3h10l-2 4z" ${B}/><path d="M6 3h4v5H6z" fill="#f9cf4a"/>`,
            bend: `<path d="M2 4q10-4 12 5l-4 6q-1-8-8-6z" ${B}/><path d="M5 7q5 0 6 5" fill="none" stroke="#111" stroke-width="1.500"/>`,
            gridsq: `<path d="M1.500 1.500h13v13h-13z" fill="#6f8bd6" stroke="#1b2750"/><path d="M4.500 1v13M8 1v13M11.500 1v13M1 4.500h13M1 8h13M1 11.500h13" stroke="#223266" stroke-width=".7"/>`,
            lines: `<path d="M4 3h8M4 6.500h8M4 10h8M4 13.500h8" stroke="#cfae13" stroke-width="1.500"/><path d="M12 1h3v3M1 12v3h3" ${N}/>`,
            wrench: `<path d="M3 2l2 3 3-1-1-3q5 1 4 6l4 5-3 3-5-5Q1 11 2 5z" fill="#111"/>`,
            convert: `<path d="M1 2h8v8H1z" ${B}/><circle cx="11" cy="11" r="4" ${B}/><path d="M2 12q1 3 4 3" ${N}/>`,
            goldcube: `<path d="M3 5l4-3 6 2v7l-4 3-6-2zM3 5l6 2 4-3M9 7v7" ${Y}/>${brackets}`,
            crease: `<path d="M1 13Q4 2 8 2l7 9-4 3-5-7z" ${B}/><path d="M4 12q1-7 5-9" fill="none" stroke="#f4c326" stroke-width="2"/>${brackets}`,
            globe: `<circle cx="8" cy="8" r="6" ${B}/><path d="M2 8h12M4 4q4 2 8 0M4 12q4-2 8 0M8 2v12" fill="none" stroke="#d8b936"/>${brackets}`,
            strip: `<path d="M1 10l4-6 10-1-4 9-5-2zM4 7l9 1M9 3l-3 8" ${Y}/>${brackets}`,
            brush: `<path d="M15 1L8 7l2 2z" fill="#c7702b" stroke="#4d2508"/><path d="M8 7l2 2q-2 6-8 6 1-6 6-8z" fill="#f39a2b" stroke="#4d2508"/>`,
            vertex: `<circle cx="8" cy="8" r="5" ${B}/><path d="M8 8v5M8 8L4 5M8 8l4-3" stroke="#f4d126" stroke-width="1.500"/>${brackets}`,
            facesel: `<path d="M5 2h6l3 4v5l-4 3-6-2V5z" ${B}/><path d="M4 5l5 2v7l-5-2z" fill="#f8d636"/>${brackets}`,
            edgesel: `<circle cx="8" cy="8" r="5" ${B}/><path d="M3 6l5 2 5-2" fill="none" stroke="#1b2750"/><path d="M8 8v5" stroke="#f8d636" stroke-width="2"/>${brackets}`,
            forbid: `<path d="M4 4h8l-3 5v5H7V9z" ${W}/><circle cx="8" cy="8" r="6.300" fill="none" stroke="#d62222" stroke-width="2"/><path d="M3.500 3.500l9 9" stroke="#d62222" stroke-width="2"/>`,
            funnel: `<path d="M3 2h9L9 7v6H6V7z" ${W}/><path d="M11 8q4 1 3 5l-3-2M2 8q0 5 3 6" ${N} stroke-width="1.500"/>`,
            heart: `<path d="M3 1v14M13 1v14" stroke="#222"/><path d="M8 12L4 8q0-4 4-2 4-2 4 2z" fill="#d62222"/>${brackets}`,
            // panels
            ballcube: `<circle cx="7" cy="9" r="6" fill="url(#ball)"/><path d="M8 1h6v5H8z" fill="#9bb4ee" stroke="#1b2750"/>`,
            pen: `<path d="M13 1l2 2-8 8-3-2z" fill="#ec9a73" stroke="#773015"/><path d="M4 9l3 2-5 4z" fill="#333"/>`,
            screen: `<path d="M1.500 2.500h13v11h-13z" fill="#5677c8" stroke="#26396f"/><path d="M2 4h12" stroke="#fff"/><path d="M4 8h3v3H4zM9 7h3v3H9z" fill="#c2d1f5"/>`,
            sun: `<circle cx="8" cy="8" r="4" fill="#ee7b24" stroke="#6b2508"/><path d="M8 0v3M8 13v3M0 8h3M13 8h3M3 3l2 2M11 11l2 2M13 3l-2 2M5 11l-2 2" stroke="#b33c0c" stroke-width="1.500"/>`,
            del: `<path d="M2 2l12 12M14 2L2 14" stroke="#c3161c" stroke-width="2.500"/>`,
            up: `<path d="M8 4l6 7H2z" fill="#8da8ee" stroke="#24428f"/>`,
            down: `<path d="M8 12l6-7H2z" fill="#d5d7de" stroke="#999"/>`,
            left: `<path d="M4 8l7-7v14z" fill="#c3161c" stroke="#6b0a0d"/>`,
            filter: `<path d="M1.500 2h13L10 8v6H6V8z" ${B}/>`,
            docgray: `<path d="M3.500 1.500h6l3 3v10h-9zM5 6h6M5 9h6M5 12h6" fill="#ccc" stroke="#888"/>`,
            hammer: `<path d="M2 5l5-4 7 4-2 3-4-2-4 2z" fill="#222"/><path d="M9 5L4 15" stroke="#222" stroke-width="2.500"/>`,
            lamp: `<path d="M5.500 11Q3 8 3.500 5.500a4.500 4.500 0 019 0Q12 9 10.500 11v1h-5z" fill="#fbdc62" stroke="#7b5c11"/><path d="M6 14h4" stroke="#333" stroke-width="2"/>`,
            locked: `<path d="M5.500 7V4.500a2.500 2.500 0 015 0V7" fill="none" stroke="#345" stroke-width="1.500"/><path d="M3.500 7h9v7h-9z" fill="#7ba2ee" stroke="#1c3b82"/>`,
            unlocked: `<path d="M9.500 7V4a2.500 2.500 0 015 0v2" fill="none" stroke="#333" stroke-width="1.500"/><path d="M2.500 7h9v7h-9z" fill="#fbdc62" stroke="#5b430a"/>`,
        };

        // A trailing ^ marks a tool with a fly-out
        const svg = (name, cls) => {
            const key = name.replace('^', '');
            const corner = name.endsWith('^') ? '<path d="M16 12v4h-4z" fill="#222"/>' : '';
            return `<svg class="${cls}" viewBox="0 0 16 16" stroke-width=".9">${icons[key]}${corner}</svg>`;
        };
        const toolbar = (id, names, cls) => {
            document.getElementById(id).innerHTML = names.split(' ')
                .map(n => `<button class="grid place-items-center" aria-label="${n.replace('^', '')}">${svg(n, cls)}</button>`).join('');
        };

        toolbar('mainbar', 'new open save^ print props cut copy paste undo^ hand rotate zoom zoomwin zoomext^ zoomsel zoomprev^ views^ car^ cplane^ target^ select^ bulb^ lock^ layers^ wheel^ shaded wirefr^ render^ spot^ gear^ history^ grass^ help^', 'size-[14px]');
        toolbar('sidebar', 'arrow point^ pline^ curve^ circle^ ellipse^ arc^ rect^ polygon^ fillet^ patch^ sweep^ box^ spheres^ tube^ mesh^ puzzle^ explode^ trim split bool3^ dots3 offset^ blend^ text^ move^ group^ align shell^ project^ array^ dim^ flip^ check^ solids^ cone^', 'size-[14px]');
        toolbar('subd', 'hex plane subcone subcone2 cyl sphere torus torus subsphere sweep1 sweep2 loft multipipe face face patch bridgeb cube cubegrid link wall linkbox insert meshcube expand extrude width twin nosym bar slab pull bend gridsq lines wrench convert goldcube crease globe strip brush vertex facesel edgesel forbid funnel heart', 'size-[14px]');
        toolbar('layerbar', 'new copy del up down left filter^ docgray^ hammer^ help', 'size-[11px]');

        document.getElementById('menu').innerHTML = '文件(F) 编辑(E) 查看(V) 曲线(C) 曲面(S) 细分物件(U) 实体(O) 网格(M) 尺寸标注(D) 变动(T) 工具(L) 分析(A) 渲染(R) 面板(P) V-Ray 说明(H)'
            .split(' ').map(t => `<button>${t}</button>`).join('');

        document.getElementById('tabs').innerHTML = ['标准', '工作平面', '设置视图', '显示', '选取', '工作视窗配置', '可见性', '变动', '曲线工具', '曲面工具', '实体工具', '网格工具', '渲染工具', '出图', 'V7 的新功能', 'VRay All', 'KeyShot 10']
            .map((t, i) => `<button class="h-[20px] px-3 ${i ? '' : 'border-t border-r border-[#cdd1dc] rounded-tl-lg bg-[#f1f3fa]'}">${t}</button>`).join('');

        document.getElementById('paneltabs').innerHTML = 'wheel layers ballcube pen open screen sun'.split(' ')
            .map((n, i) => `<button class="w-[26px] h-[17px] grid place-items-center ${i === 1 ? 'border border-b-0 border-[#cdd0dc] bg-[#f3f4fb]' : ''}" aria-label="${n}">${svg(n, 'size-[10px]')}</button>`).join('')
            + '<span class="ml-auto mb-[1px] size-2 rounded-full bg-[#d4d6dc]"></span>';

        const box = (label, on = true) => `
            <label class="flex items-center gap-[1px]">
                <span class="grid size-[9px] place-items-center">
                    <input type="checkbox" ${on ? 'checked' : ''} class="peer col-start-1 row-start-1 appearance-none size-[7px] checked:size-[9px] border border-[#b4b7c0] checked:border-[#333] bg-[#f4f5fa]">
                    <svg class="col-start-1 row-start-1 size-[9px] pointer-events-none hidden peer-checked:block" viewBox="0 0 9 9" fill="none" stroke="#111"><path d="M2 4.500l2 2 3.500-4"/></svg>
                </span>${label}
            </label>`;

        document.getElementById('filters').innerHTML =
            ['点物件', '曲线', '曲面', '多重曲面', '细分物件', '网格', '注解', '灯光', '图块', '控制点', '点云', '剖面线', '其它'].map(t => box(t)).join('')
            + box('停用', false) + box('子物件', false);

        document.getElementById('osnap').innerHTML =
            ['端点', '最近点', '点', '中点', '中心点', '交点', '垂点', '切点', '四分点', '节点', '顶点'].map(t => box(t)).join('')
            + box('投影', false) + '<span class="w-[4px]"></span>' + box('停用', false);

        const layers = [
            { name: '默认', pad: 'pl-[15px] font-bold', current: true },
            { name: '参考图纸', pad: 'pl-[4px]', open: true, lock: 'unlocked' },
            { name: '平面图', pad: 'pl-[25px]', lock: 'locked' },
            { name: '剖面A', pad: 'pl-[25px]', lock: 'locked' },
            { name: '剖面B', pad: 'pl-[25px]', lock: 'locked', selected: true },
        ];
        document.getElementById('layers').innerHTML = layers.map(l => `
            <tr class="h-[13px] border-b border-[#eceef2] ${l.selected ? 'bg-[#5cabdf]' : ''}">
                <td class="${l.pad} whitespace-nowrap">${l.open ? '<svg class="inline size-[7px] mr-[4px]" viewBox="0 0 8 8" fill="none" stroke="#222" stroke-width="1.500"><path d="M1 2l3 3 3-3"/></svg>' : ''}${l.name}</td>
                <td>${l.current ? '<svg class="mx-auto size-[9px]" viewBox="0 0 10 10" fill="none" stroke="#111"><path d="M1 5l3 3 5-6"/></svg>' : ''}</td>
                <td>${l.lock ? svg('lamp', 'mx-auto size-[9px]') : ''}</td>
                <td>${l.lock ? svg(l.lock, 'mx-auto size-[9px]') : ''}</td>
                <td><div class="mx-auto size-[10px] bg-black"></div></td>
                <td><div class="ml-[2px] size-[10px] rounded-full ${l.selected ? 'bg-white' : 'bg-[#fafafb]'}"></div></td>
            </tr>`).join('');

        // Construction plane grid: two pencils of lines running to the vanishing points
        const vpA = { x: -1464, y: -307 }, vpB = { x: 1236, y: -307 };
        const base = 594, stepA = 73, stepB = 43;
        const hit = (a, b) => {
            const k1 = (base - vpA.y) / (a - vpA.x), k2 = (base - vpB.y) / (b - vpB.x);
            const x = (vpB.y - vpA.y + k1 * vpA.x - k2 * vpB.x) / (k1 - k2);
            return [x, vpA.y + k1 * (x - vpA.x)];
        };
        const end = (p, vp) => [p[0] + (p[0] - vp.x) * 6, p[1] + (p[1] - vp.y) * 6];
        let lines = '';
        for (let i = -18; i <= 24; i++) {
            const p = hit(1524 - i * stepA, 239 - 20 * stepB), q = end(p, vpA);
            lines += `<path d="M${p}L${q}"/>`;
        }
        for (let j = -20; j <= 26; j++) {
            const p = hit(1524 + 18 * stepA, 239 + j * stepB), q = end(p, vpB);
            lines += `<path d="M${p}L${q}"/>`;
        }
        document.getElementById('grid').innerHTML = lines;
    </script>
</body>
</html>
